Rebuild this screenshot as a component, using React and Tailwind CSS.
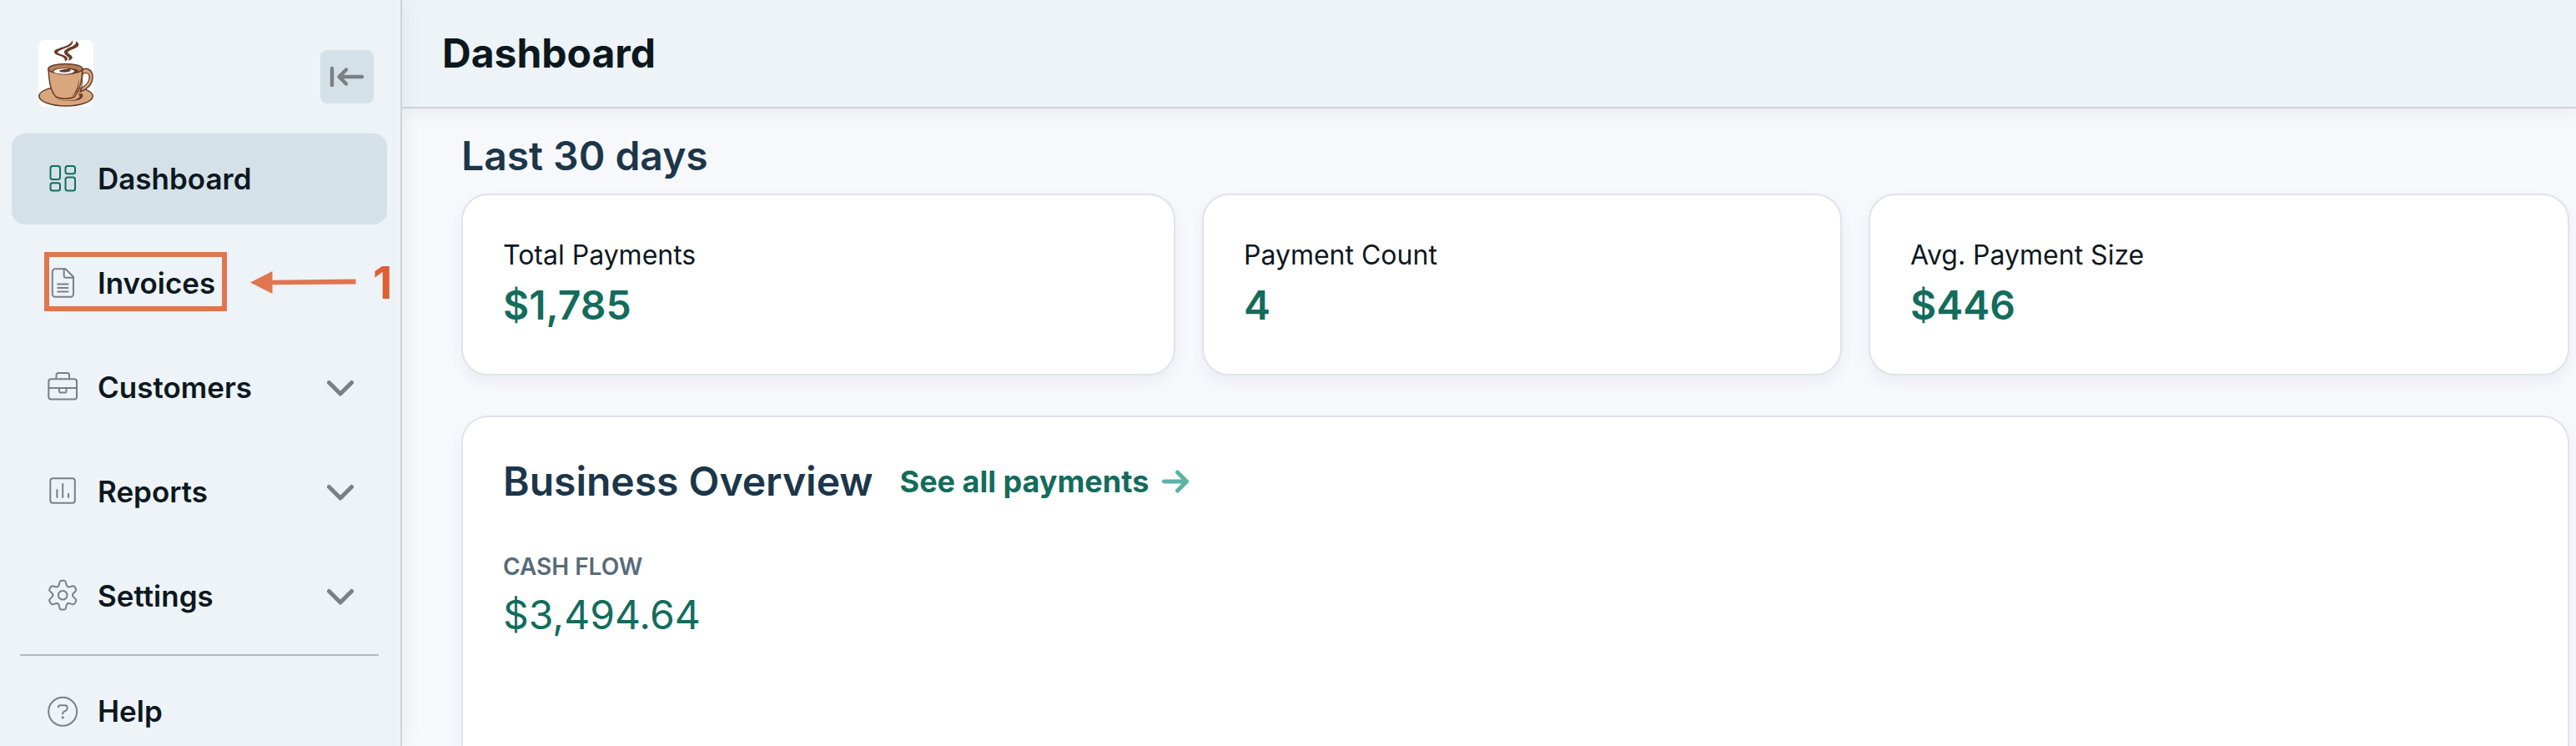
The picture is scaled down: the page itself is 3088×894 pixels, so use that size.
import React, { useState } from 'react';

const DashboardIcon = () => (
  <svg viewBox="0 0 42 42" className="size-[42px] shrink-0" fill="none" stroke="currentColor" strokeWidth="2">
    <rect x="6.5" y="5" width="11.5" height="16" rx="2.5" />
    <rect x="6.5" y="25.3" width="11.5" height="9.2" rx="2.5" />
    <rect x="24.5" y="5" width="11.5" height="9.2" rx="2.5" />
    <rect x="24.5" y="18.5" width="11.5" height="16" rx="2.5" />
  </svg>
);

const InvoiceIcon = () => (
  <svg viewBox="0 0 42 42" className="size-[42px] shrink-0" fill="none" stroke="currentColor" strokeWidth="2" strokeLinecap="round" strokeLinejoin="round">
    <path d="M24.5 3.3H12a3.2 3.2 0 0 0-3.2 3.2v27a3.2 3.2 0 0 0 3.2 3.2h18.8a3.2 3.2 0 0 0 3.2-3.2V12.8z" />
    <path d="M22.7 3.3v8.5a2 2 0 0 0 2 2H34M15.2 21.5h12.3M15.2 26h12.3M15.2 30.5h12.3" />
  </svg>
);

const CustomersIcon = () => (
  <svg viewBox="0 0 42 42" className="size-[42px] shrink-0" fill="none" stroke="currentColor" strokeWidth="2" strokeLinecap="round" strokeLinejoin="round">
    <rect x="4.3" y="10.3" width="33.7" height="24.2" rx="3" />
    <path d="M13.5 10V5.5a2.500 2.500 0 0 1 2.500-2.500h10.500a2.500 2.500 0 0 1 2.500 2.500V10" />
    <path d="M4.5 21h33.500M17 21v4a1.500 1.500 0 0 0 1.500 1.500h5.500a1.500 1.500 0 0 0 1.500-1.500v-4" />
  </svg>
);

const ReportsIcon = () => (
  <svg viewBox="0 0 42 42" className="size-[42px] shrink-0" fill="none" stroke="currentColor" strokeWidth="2" strokeLinecap="round">
    <rect x="6.3" y="4.2" width="29.5" height="29.5" rx="3" />
    <path d="M14.4 18v9M21.2 11v16M28 22.7v4.3" />
  </svg>
);

const SettingsIcon = () => (
  <svg viewBox="0 0 42 42" className="size-[42px] shrink-0" fill="none" stroke="currentColor" strokeWidth="2" strokeLinecap="round" strokeLinejoin="round">
    <circle cx="21.2" cy="19.2" r="5.3" />
    {[0, 60, 120, 180, 240, 300].map((angle) => (
      <path
        key={angle}
        transform={`rotate(${angle} 21.2 19.2)`}
        d="M15.3 9C17.6 7.8 16.7 5 17.8 3Q18.5 1.8 19.8 1.8H22.6Q23.9 1.8 24.6 3C25.7 5 24.8 7.8 27.1 9"
      />
    ))}
  </svg>
);

const HelpIcon = () => (
  <svg viewBox="0 0 42 42" className="size-[42px] shrink-0" fill="none" stroke="currentColor" strokeWidth="2" strokeLinecap="round" strokeLinejoin="round">
    <circle cx="21.2" cy="20.8" r="17" />
    <path d="M15.8 15.2q.4-2 2.500-2h5.400q3 0 3 3v.6q0 1.600-1.600 2.500l-2.600 1.500q-1.300.8-1.300 2.600" />
    <circle cx="21.2" cy="27.8" r="1.6" fill="currentColor" stroke="none" />
  </svg>
);

const Chevron = () => (
  <svg viewBox="0 0 32 22" className="h-[22px] w-8" fill="none" stroke="currentColor" strokeWidth="5" strokeLinecap="round" strokeLinejoin="round">
    <path d="M2.500 4.500L16 18L29.500 4.500" />
  </svg>
);

const Logo = () => (
  <svg viewBox="0 0 66 80" className="h-20 w-[66px] rounded-lg bg-white" role="img" aria-label="Coffee cup">
    <g stroke="#6b3a2a" fill="#d9a77f" strokeWidth="1.500">
      <ellipse cx="33" cy="67.2" rx="32.2" ry="11.8" />
      <path d="M20 69c2 4 22 5 27 1 4-2 3-4 0-5l5-1c3 2 1 7-5 8-9 2-24 1-27-3z" fill="#6b3a2a" stroke="none" />
      <path d="M52 36c6-4 13 0 13 8 0 9-7 15-15 18l2-5c5-3 9-7 9-13 0-4-4-6-8-3z" />
      <path d="M53 41c4-3 8-1 8 3 0 6-4 10-9 13z" fill="#fff" strokeWidth="1" />
      <path d="M12 35c1 15 2 25 9 33 5 3 17 3 22 0 7-8 9-18 10-33z" />
      <path d="M48.500 46c-1 10-3 15-8.500 22 7-5 9-12 8.500-22z" fill="#6b3a2a" stroke="none" />
      <ellipse cx="32.4" cy="34.5" rx="20.6" ry="6" fill="#b07f58" />
      <ellipse cx="32.4" cy="37.4" rx="15.5" ry="4" fill="#6b3a2a" stroke="none" />
      <path d="M18 38c2-4 12-4 18-3.500-4 .5-10 1-11 2.500 1 2 7 2 11 1 3-1 4-2 1-2.500 4-.5 7 1 6 2.500-3 3-20 4-25 0z" fill="#fff" stroke="none" />
    </g>
    <g fill="#6b3a2a">
      <path d="M40 0c3 3 0 7-6 9-5 2-11 4-11 6 1 2 13 3 12 8l-3 3c1-9-13-6-13-12C19 9 41 8 40 0z" />
      <path d="M45 1c7 5 2 8-4 10-4 2-7 3-5 5 3 2 8 5 2 8l-3 .500c6-4-4-5-4-10 0-6 16-6 14-13.500z" />
    </g>
  </svg>
);

const navItems = [
  { name: 'Dashboard', icon: DashboardIcon, active: true },
  { name: 'Invoices', icon: InvoiceIcon, callout: '1' },
  { name: 'Customers', icon: CustomersIcon, expandable: true },
  { name: 'Reports', icon: ReportsIcon, expandable: true },
  { name: 'Settings', icon: SettingsIcon, expandable: true },
];

const stats = [
  { label: 'Total Payments', value: '$1,785' },
  { label: 'Payment Count', value: '4' },
  { label: 'Avg. Payment Size', value: '$446' },
];

const Callout = ({ label }) => (
  <div className="pointer-events-none absolute inset-0">
    <div className="absolute top-[17px] left-[39px] h-[71px] w-[219px] border-6 border-[#e07550]" />
    <svg viewBox="0 0 128 28" className="absolute top-[40px] left-[286px] h-7 w-32" fill="#e07550">
      <path d="M0 13.500L26.500 0V27z" />
      <path d="M26 10.800L126.500 9.500V15.500L26 16.300z" />
    </svg>
    <span className="absolute top-[24px] left-[433px] text-[54px] leading-[60px] font-bold text-[#dd5f33]">
      {label}
    </span>
  </div>
);

const itemClass = 'flex h-[109px] w-full items-center gap-[21px] rounded-2xl px-10 text-[35px] font-semibold';

const NavItem = ({ item }) => {
  const [open, setOpen] = useState(false);
  const Icon = item.icon;

  if (item.expandable) {
    return (
      <li>
        <button type="button" aria-expanded={open} onClick={() => setOpen(!open)} className={itemClass}>
          <span className="text-[#7b8083]"><Icon /></span>
          {item.name}
          <span className="ml-auto text-[#7b8083]"><Chevron /></span>
        </button>
      </li>
    );
  }

  return (
    <li className="relative">
      <a href="#" className={`${itemClass} ${item.active ? 'bg-[#d5e1e9]' : ''}`}>
        <span className={item.active ? 'text-[#136c5c]' : 'text-[#7b8083]'}><Icon /></span>
        {item.name}
      </a>
      {item.callout && <Callout label={item.callout} />}
    </li>
  );
};

const Sidebar = () => (
  <aside className="z-20 w-[482px] shrink-0 overflow-hidden border-r-2 border-[#cdd5d9] bg-[#edf3f7] shadow-[0_0_24px_rgba(0,0,0,0.06)]">
    <div className="flex items-end justify-between pt-12 pr-8 pb-8 pl-[46px]">
      <Logo />
      <button type="button" aria-label="Collapse menu" className="mb-1 flex size-16 items-center justify-center rounded-lg bg-[#d5e1e9] text-[#7b8083]">
        <svg viewBox="0 0 42 26" className="h-[26px] w-[42px]" fill="none" stroke="currentColor" strokeWidth="4.500" strokeLinecap="round" strokeLinejoin="round">
          <path d="M3 3v20M39 13H12M20 4.500L11.500 13L20 21.500" />
        </svg>
      </button>
    </div>
    <nav className="pr-4 pl-[14px]">
      <ul className="flex flex-col gap-4">
        {navItems.map((item) => (
          <NavItem key={item.name} item={item} />
        ))}
      </ul>
      <hr className="mx-[10px] mt-[15px] mb-3 border-t-2 border-[#b3b9bd]" />
      <a href="#" className={itemClass}>
        <span className="text-[#7b8083]"><HelpIcon /></span>
        Help
      </a>
    </nav>
  </aside>
);

const App = () => {
  return (
    <div className="flex h-screen overflow-hidden bg-[#f7f8fc] font-[Inter,sans-serif] text-[#0d181e]">
      <Sidebar />

      <div className="flex min-w-0 flex-1 flex-col">
        <header className="z-10 flex h-[130px] shrink-0 items-center border-b-2 border-[#cdd5d9] bg-[#edf3f7] px-12 shadow-[0_4px_24px_rgba(0,0,0,0.06)]">
          <h1 className="text-5xl font-bold">Dashboard</h1>
        </header>

        <main className="flex flex-1 flex-col pt-[29px] pr-2 pl-[71px]">
          <h2 className="text-5xl leading-14 font-semibold text-[#1c364a]">Last 30 days</h2>

          <div className="mt-[17px] grid grid-cols-[856fr_767fr_840fr] gap-8">
            {stats.map((stat) => (
              <div
                key={stat.label}
                className="rounded-[32px] border-2 border-[#e0e3e9] bg-white px-12 pt-12 pb-[46px] shadow-[0_8px_16px_rgba(28,74,96,0.06)]"
              >
                <p className="text-[32px] leading-12">{stat.label}</p>
                <p className="text-5xl leading-18 font-semibold text-[#136c5c]">{stat.value}</p>
              </div>
            ))}
          </div>

          <section className="mt-12 flex-1 rounded-t-[32px] border-2 border-b-0 border-[#e0e3e9] bg-white px-12 pt-[49px] shadow-[0_8px_16px_rgba(28,74,96,0.06)]">
            <div className="flex items-center gap-8">
              <h2 className="text-5xl leading-14 font-semibold text-[#1c364a]">Business Overview</h2>
              <a href="#" className="flex items-center gap-4 text-4xl font-bold text-[#136c5c]">
                See all payments
                <svg viewBox="0 0 32 28" className="h-7 w-8" fill="none" stroke="#5ab4a5" strokeWidth="5" strokeLinecap="round" strokeLinejoin="round">
                  <path d="M2.500 14H29M18.500 3L29.500 14L18.500 25" />
                </svg>
              </a>
            </div>
            <p className="mt-14 text-[28px] leading-9 font-semibold text-[#566b79]">CASH FLOW</p>
            <p className="text-5xl leading-20 text-[#136c5c]">$3,494.64</p>
          </section>
        </main>
      </div>
    </div>
  );
};

export default App;
